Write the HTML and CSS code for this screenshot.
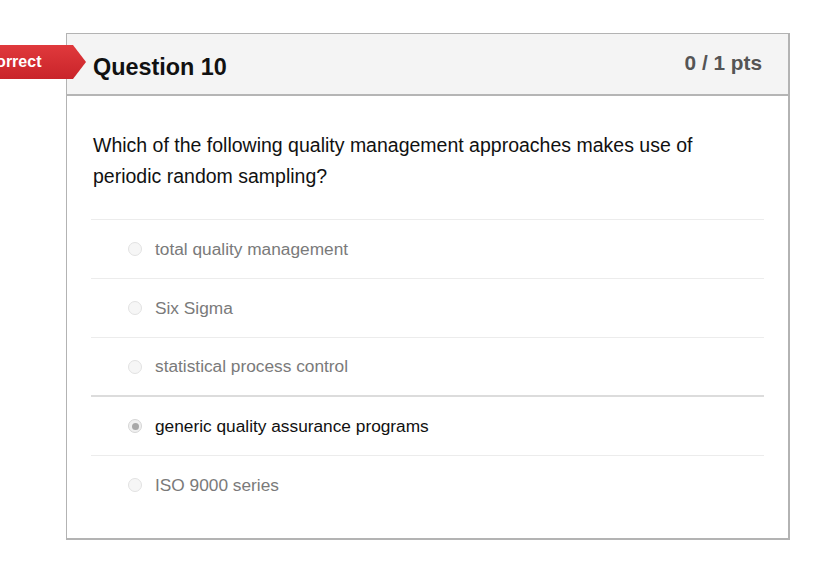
FILE: index.html
```html
<!DOCTYPE html>
<html>
<head>
<meta charset="utf-8">
<link rel="stylesheet" href="styles.css">
</head>
<body>
<div class="page">
  <div class="badge"><span class="badge-text">Incorrect</span></div>
  <div class="card">
    <div class="card-header">
      <div class="q-title">Question 10</div>
      <div class="q-pts">0 / 1 pts</div>
    </div>
    <div class="card-body">
      <div class="q-text">Which of the following quality management approaches makes use of periodic random sampling?</div>
      <div class="answers">
        <div class="answer"><span class="radio"></span><span class="label">total quality management</span></div>
        <div class="answer"><span class="radio"></span><span class="label">Six Sigma</span></div>
        <div class="answer before-selected"><span class="radio"></span><span class="label">statistical process control</span></div>
        <div class="answer selected"><span class="radio checked"></span><span class="label">generic quality assurance programs</span></div>
        <div class="answer"><span class="radio"></span><span class="label">ISO 9000 series</span></div>
      </div>
    </div>
  </div>
</div>
</body>
</html>
```
FILE: styles.css
```css
html, body {
  margin: 0;
  padding: 0;
  background: #ffffff;
  font-family: "Liberation Sans", Arial, sans-serif;
}
.page {
  position: relative;
  padding: 33px 0 0 66px;
}
.badge {
  position: absolute;
  left: -38px;
  top: 45px;
  height: 34px;
  width: 124px;
  background: linear-gradient(#e0393c, #c9242a);
  clip-path: polygon(0 0, 111px 0, 124px 17px, 111px 34px, 0 34px);
  display: flex;
  align-items: center;
}
.badge-text {
  color: #fff;
  font-weight: bold;
  font-size: 16px;
  padding-left: 11px;
}
.card {
  width: 721px;
  border: 1px solid #b3b3b3;
  border-right-width: 2px;
  border-bottom-width: 2px;
  background: #fff;
}
.card-header {
  background: #f4f4f4;
  border-bottom: 2px solid #b5b5b5;
  height: 62px;
  display: flex;
  justify-content: space-between;
  padding: 0 26px;
  box-sizing: border-box;
}
.q-title {
  font-weight: bold;
  font-size: 23.4px;
  color: #111;
  padding-top: 20px;
}
.q-pts {
  font-weight: bold;
  font-size: 20.8px;
  color: #555;
  padding-top: 17px;
}
.card-body {
  padding: 34px 24px 24px 24px;
}
.q-text {
  font-size: 19.5px;
  line-height: 31px;
  color: #111;
  padding: 0 2px;
  margin-bottom: 27px;
}
.answers {
  border-top: 1px solid #ececec;
}
.answer {
  height: 58px;
  display: flex;
  align-items: center;
  border-bottom: 1px solid #ececec;
  padding-left: 37px;
}
.answer.before-selected {
  border-bottom: 2px solid #dcdcdc;
  height: 57px;
}
.answer:last-child {
  border-bottom: none;
}
.radio {
  width: 14px;
  height: 14px;
  border-radius: 50%;
  border: 1px solid #e2e2e2;
  background: #f6f6f6;
  box-sizing: border-box;
  margin-right: 13px;
  display: flex;
  align-items: center;
  justify-content: center;
}
.radio.checked {
  border-color: #d6d6d6;
  background: #f0f0f0;
}
.radio.checked::after {
  content: "";
  width: 7px;
  height: 7px;
  border-radius: 50%;
  background: #a8a8a8;
}
.label {
  font-size: 17.3px;
  color: #7a7a7a;
}
.answer.selected .label {
  color: #111;
}
```
